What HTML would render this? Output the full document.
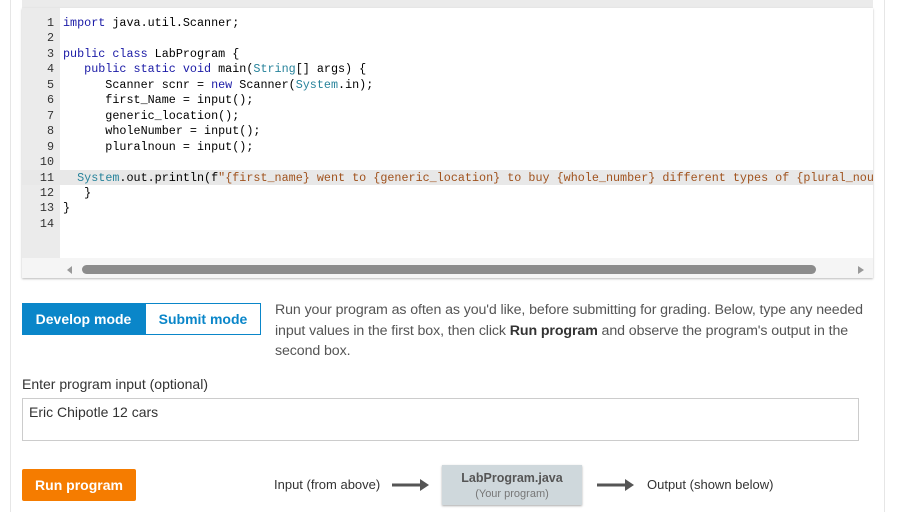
<!DOCTYPE html>
<html><head><style>
body{margin:0;width:899px;height:512px;background:#fff;position:relative;overflow:hidden;font-family:"Liberation Sans",sans-serif;}
.a{position:absolute;}
.code{font-family:"Liberation Mono",monospace;font-size:11.75px;line-height:15.45px;white-space:pre;color:#000;}
.ln{color:#333;text-align:right;width:32px;}
.k{color:#1a1aa6;}
.t{color:#27839b}
.s{color:#a0521d;}
.p{font-size:14.2px;color:#555;line-height:20.5px;letter-spacing:-0.1px;}
</style></head><body>
<div class="a" style="left:10px;top:0;width:1px;height:512px;background:#e6e6e6"></div>
<div class="a" style="left:884px;top:0;width:1px;height:512px;background:#e6e6e6"></div>
<div class="a" style="left:22px;top:0;width:851px;height:8px;background:#ebebeb"></div>
<div class="a" style="left:22px;top:8px;width:851px;height:270px;background:#fff;box-shadow:0 1px 2px #bbb"></div>
<div class="a" style="left:22px;top:8px;width:38px;height:270px;background:#ebebeb"></div>
<div class="a" style="left:22px;top:170px;width:851px;height:15px;background:#e8e8e8"></div>
<div class="a" style="left:22px;top:258px;width:851px;height:20px;background:#f5f5f5"></div>
<div class="a" style="left:82px;top:265px;width:734px;height:9px;background:#8c8c8c;border-radius:5px"></div>
<div class="a" style="left:67px;top:266px;width:0;height:0;border-top:4px solid transparent;border-bottom:4px solid transparent;border-right:5px solid #999"></div>
<div class="a" style="left:858px;top:266px;width:0;height:0;border-top:4px solid transparent;border-bottom:4px solid transparent;border-left:6px solid #999"></div>
<div class="a code ln" style="left:22px;top:16px">1
2
3
4
5
6
7
8
9
10
11
12
13
14</div>
<div class="a code" style="left:63px;top:16px"><span class="k">import</span> java.util.Scanner;

<span class="k">public class</span> LabProgram {
   <span class="k">public static void</span> main(<span class="t">String</span>[] args) {
      Scanner scnr = <span class="k">new</span> Scanner(<span class="t">System</span>.in);
      first_Name = input();
      generic_location();
      wholeNumber = input();
      pluralnoun = input();

  <span class="t">System</span>.out.println(f<span class="s">"{first_name} went to {generic_location} to buy {whole_number} different types of {plural_nou</span>
   }
}
</div>
<div class="a" style="left:22px;top:303px;width:123px;height:32px;background:#0a86c9;border:1px solid #0a86c9;box-sizing:border-box;color:#fff;font-weight:bold;font-size:14px;line-height:30px;text-align:center">Develop mode</div>
<div class="a" style="left:145px;top:303px;width:116px;height:32px;background:#fff;border:1px solid #0a86c9;box-sizing:border-box;color:#0a86c9;font-weight:bold;font-size:14px;line-height:30px;text-align:center">Submit mode</div>
<div class="a p" style="left:275px;top:300px;width:610px">Run your program as often as you'd like, before submitting for grading. Below, type any needed<br>input values in the first box, then click <b style="color:#333">Run program</b> and observe the program's output in the<br>second box.</div>
<div class="a" style="left:22px;top:376px;font-size:14px;color:#333">Enter program input (optional)</div>
<div class="a" style="left:22px;top:398px;width:837px;height:43px;border:1px solid #ccc;box-sizing:border-box;font-size:14px;color:#333;padding:5px 6px">Eric Chipotle 12 cars</div>
<div class="a" style="left:22px;top:469px;width:114px;height:32px;background:#f57c00;color:#fff;font-weight:bold;font-size:14px;line-height:32px;text-align:center;border-radius:2px">Run program</div>
<div class="a" style="left:274px;top:477px;font-size:13px;color:#333">Input (from above)</div>
<svg class="a" style="left:392px;top:478px" width="38" height="14"><path d="M0 7H30" stroke="#555" stroke-width="3"/><path d="M28 1L37 7L28 13Z" fill="#555"/></svg>
<div class="a" style="left:442px;top:465px;width:140px;height:40px;background:#cfd8dc;text-align:center;box-shadow:0 1px 2px #aaa"><div style="font-size:12.5px;font-weight:bold;color:#555;margin-top:6px">LabProgram.java</div><div style="font-size:11px;color:#777;margin-top:3px">(Your program)</div></div>
<svg class="a" style="left:597px;top:478px" width="38" height="14"><path d="M0 7H30" stroke="#555" stroke-width="3"/><path d="M28 1L37 7L28 13Z" fill="#555"/></svg>
<div class="a" style="left:647px;top:477px;font-size:13px;color:#333">Output (shown below)</div>
</body></html>
